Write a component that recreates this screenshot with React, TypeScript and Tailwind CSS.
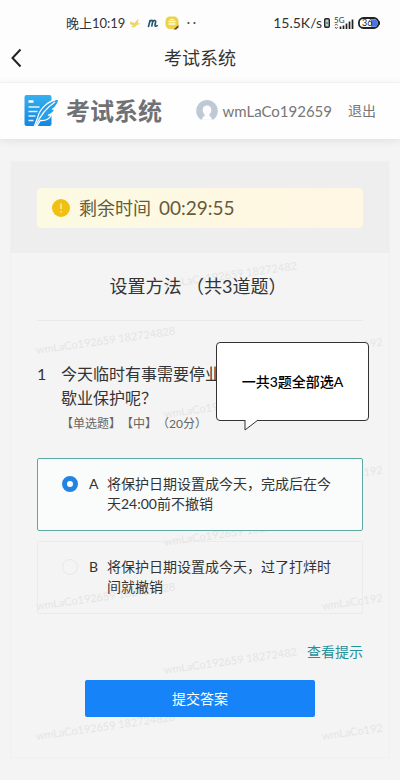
import { useState } from 'react';
import { clsx } from 'clsx';

interface Option {
  key: string;
  text: string;
}

const OPTIONS: Option[] = [
  { key: 'A', text: '将保护日期设置成今天，完成后在今天24:00前不撤销' },
  { key: 'B', text: '将保护日期设置成今天，过了打烊时间就撤销' },
];

function StatusBar() {
  return (
    <div className="flex h-[22px] items-center justify-between pl-[66px] pr-5 text-[#333]">
      <div className="flex items-center">
        <span className="text-[13px] leading-5">晚上10:19</span>
        <svg className="ml-1 h-3 w-3" viewBox="0 0 12 12" aria-hidden="true">
          <path d="M1 4.5 5.500 6 9.500 1.500 9 6l2.500 1-3 .8L5 10.500 2 10l2-1.500L1 7Z" fill="#ecd768" />
        </svg>
        <svg className="ml-[6px] h-3 w-3" viewBox="0 0 12 12" fill="none" aria-hidden="true">
          <path
            d="M1.5 9.5 3 3.5M2.7 5C4 2.6 6 3 5.6 5L4.8 9M5.6 5c1.2-2.2 3.4-2 3 0L8 8c-.2 1.4 1 1.6 2.2.6"
            stroke="#24566f"
            strokeWidth="1.6"
            strokeLinecap="round"
          />
        </svg>
        <svg className="ml-[6px] h-[14px] w-[14px]" viewBox="0 0 14 14" aria-hidden="true">
          <rect x="0.5" y="0.5" width="13" height="12.5" rx="4.5" fill="#ecd34c" />
          <path d="M3.5 5.5h7M3.5 8h7" stroke="#fffbe0" strokeWidth="1.4" />
          <path d="M5 3.5h4" stroke="#fffbe0" />
          <path d="m8.500 13.500 5-4.500v2.500l-2.500 2Z" fill="#6b3a22" />
        </svg>
        <svg className="ml-[6px] h-3 w-3" viewBox="0 0 12 12" fill="#444" aria-hidden="true">
          <circle cx="3.500" cy="6" r="1.1" />
          <circle cx="9.500" cy="6" r="1.1" />
        </svg>
      </div>
      <div className="flex items-center">
        <span className="text-sm leading-5">15.5K/s</span>
        <svg className="ml-[2px] h-[10px] w-[6px]" viewBox="0 0 6 10" aria-hidden="true">
          <rect x="0.7" y="0.7" width="4.6" height="8.6" rx="1.2" fill="#b9d6c8" stroke="#222" strokeWidth="1.4" />
          <path d="M2 5h2" stroke="#444" />
        </svg>
        <svg className="ml-1 h-[14px] w-5" viewBox="0 0 20 14" aria-hidden="true">
          <text x="0" y="6.500" fontSize="8" fill="#333">
            5G
          </text>
          <path d="m1 9.500 1.300-1.600L3.600 9.500M1 11l1.300 1.600L3.600 11" stroke="#555" fill="none" />
          <path d="M6.500 10.500V13M9.500 9.500V13M12.500 7.500V13M15.500 5.500V13M18.500 3.500V13" stroke="#222" strokeWidth="1.700" />
        </svg>
        <svg className="ml-1 h-3 w-[22px]" viewBox="0 0 22 12" aria-hidden="true">
          <rect x="0.900" y="1" width="19.500" height="10" rx="4.500" fill="#fff" stroke="#222" strokeWidth="1.800" />
          <path d="M13 2.200h3.600a2.600 2.600 0 0 1 2.600 2.600v2.400a2.600 2.600 0 0 1-2.600 2.600H13Z" fill="#4b74e0" />
          <path d="M21.400 4.300v3.400" stroke="#222" strokeWidth="1.200" />
          <text x="4" y="9" fontSize="9" fill="#222">
            36
          </text>
        </svg>
      </div>
    </div>
  );
}

function Logo() {
  return (
    <svg className="h-9 w-9" viewBox="0 0 36 36" aria-hidden="true">
      <defs>
        <linearGradient id="paper" x1="0" y1="0" x2="0" y2="1">
          <stop offset="0" stopColor="#35b0f0" />
          <stop offset="1" stopColor="#1587e0" />
        </linearGradient>
      </defs>
      <rect x="0.5" y="2" width="27" height="31" rx="2" fill="url(#paper)" />
      <path d="M4.500 8.500h5" stroke="#fff" strokeWidth="2.500" />
      <path d="M4.500 14h11M4.500 18.500h9M4.500 23h7M4.500 27.500h5" stroke="#e4f4ff" strokeWidth="1.300" />
      <path
        d="M35 5.500C24 8 15.500 15.500 13.500 25L10.500 33h2.500l3.300-5.500c5.200.5 9-1.500 11.200-5.500l-3 .2c3.500-1.200 5.500-3.400 6.500-6.200l-2.500.2c3.500-2.400 6-6.200 6.500-10.700Z"
        fill="#2a9fe9"
        stroke="#fff"
        strokeWidth="1.300"
        strokeLinejoin="round"
      />
      <path d="M12 32.500C16 23 22 15 31 9" stroke="#fff" strokeWidth="1.300" fill="none" />
    </svg>
  );
}

function Avatar() {
  return (
    <svg className="h-[22px] w-[22px]" viewBox="0 0 22 22" aria-hidden="true">
      <path d="M4.500 19.500a10.800 10.800 0 1 1 13 0Z" fill="#bfc9d6" />
      <path
        d="M11 5.500c2.800 0 4.300 2 4.300 4.500 0 2-1 3.600-1.800 4.300v1.700c1.500.7 2.300 1.900 2.500 3.700H6c.2-1.800 1-3 2.500-3.700v-1.700c-.8-.7-1.800-2.300-1.800-4.300 0-2.500 1.500-4.500 4.300-4.500Z"
        fill="#fdfdfd"
      />
    </svg>
  );
}

function Watermark({ text, className }: { text: string; className: string }) {
  return (
    <span
      className={clsx(
        'absolute origin-bottom-left -rotate-8 whitespace-nowrap text-[11px] leading-4 text-[#e5e5e5]',
        className
      )}
    >
      {text}
    </span>
  );
}

function Watermarks() {
  return (
    <div className="pointer-events-none absolute inset-0 select-none" aria-hidden="true">
      <Watermark text="wmLaCo192659 182724828" className="left-[26px] top-[180px]" />
      <Watermark text="wmLaCo192659 182724828" className="left-[26px] top-[436px]" />
      <Watermark text="wmLaCo192659 182724828" className="left-[26px] top-[566px]" />
      <Watermark text="wmLaCo192659 18272482" className="left-[154px] top-[114px]" />
      <Watermark text="wmLaCo192659" className="left-[154px] top-[244px]" />
      <Watermark text="wmLaCo192659 18272482" className="left-[154px] top-[372px]" />
      <Watermark text="wmLaCo192659 18272482" className="left-[154px] top-[500px]" />
      <Watermark text="wmLaCo192" className="left-[312px] top-[180px]" />
      <Watermark text="wmLaCo192" className="left-[312px] top-[308px]" />
      <Watermark text="wmLaCo192" className="left-[312px] top-[436px]" />
      <Watermark text="wmLaCo192" className="left-[312px] top-[566px]" />
    </div>
  );
}

function Callout() {
  return (
    <div className="absolute left-[179px] -top-5 w-[153px]">
      <div className="flex h-[79px] items-center justify-center rounded border border-[#333] bg-white text-sm font-medium text-black">
        一共3题全部选A
      </div>
      <svg className="absolute left-7 top-[77px] h-3 w-4" viewBox="0 0 16 12" aria-hidden="true">
        <path d="M1 0V11L14 1V0Z" fill="#fff" />
        <path d="M1 1V11L14 1" fill="none" stroke="#333" />
      </svg>
    </div>
  );
}

export default function App() {
  const [selected, setSelected] = useState('A');

  return (
    <div className="min-h-screen bg-[#f4f4f4] font-[Lato,'Noto_Sans_CJK_SC',sans-serif] text-[#333]">
      <div className="bg-[#fdfdfd] pt-3">
        <StatusBar />
        <div className="relative flex h-12 items-center justify-center">
          <button type="button" aria-label="返回" className="absolute left-[9px] p-px">
            <svg className="h-5 w-3" viewBox="0 0 12 20" fill="none" aria-hidden="true">
              <path d="M10.500 1.500 2.500 10l8 8.500" stroke="#222" strokeWidth="2" />
            </svg>
          </button>
          <h1 className="text-lg">考试系统</h1>
        </div>
      </div>

      <header className="relative flex h-[57px] items-center justify-between border-t border-[#f0f0f0] bg-[#fefefe] px-6 shadow-[0_2px_8px_rgba(0,0,0,0.08)]">
        <div className="flex items-center gap-[6px]">
          <Logo />
          <span className="text-2xl font-bold text-[#707174]">考试系统</span>
        </div>
        <div className="flex items-center text-[#777]">
          <Avatar />
          <span className="ml-1 text-[15px]">wmLaCo192659</span>
          <a href="#logout" className="ml-4 text-sm">
            退出
          </a>
        </div>
      </header>

      <main className="px-[10px] pb-[22px] pt-[22px]">
        <div className="relative border border-[#f0f0f0]">
          <Watermarks />
          <div className="relative bg-[#eee] px-[26px] pb-[25px] pt-[26px]">
            <div className="flex h-10 items-center rounded bg-linear-to-r from-[#fcfae2] to-[#fff6e3] pl-[15px] text-[#665a3c]">
              <svg className="h-[18px] w-[18px]" viewBox="0 0 18 18" aria-hidden="true">
                <circle cx="9" cy="9" r="9" fill="#f2c011" />
                <path d="M9 4.500v5.500" stroke="#fff0b0" strokeWidth="1.500" />
                <circle cx="9" cy="12.800" r="0.900" fill="#fff0b0" />
              </svg>
              <span className="ml-[9px] text-lg">剩余时间</span>
              <span className="ml-2 text-[19px]">00:29:55</span>
            </div>
          </div>

          <div className="relative px-[26px] pb-10">
            <h2 className="flex h-[68px] items-center justify-center border-b border-[#e9e9e9] pb-[2px] pr-1 text-lg">
              设置方法 （共3道题）
            </h2>

            <section className="relative mt-[41px] flex">
              <span className="w-6 text-base leading-6">1</span>
              <div>
                <p className="text-base leading-6">
                  今天临时有事需要停业
                  <br />
                  歇业保护呢？
                </p>
                <p className="mt-1 text-xs leading-5 text-[#666] [text-spacing-trim:space-all]">
                  【单选题】【中】（20分）
                </p>
              </div>
              <Callout />
            </section>

            <div role="radiogroup" aria-label="选项" className="mt-6 flex flex-col gap-[10px]">
              {OPTIONS.map((option) => {
                const checked = option.key === selected;
                return (
                  <label
                    key={option.key}
                    className={clsx(
                      'flex cursor-pointer rounded-xs border pb-4 pl-6 pr-6 pt-[15px] text-sm leading-5',
                      checked ? 'border-[#5fa9a4] bg-[#fafbfb]' : 'border-[#ebebeb]'
                    )}
                  >
                    <input
                      type="radio"
                      name="answer"
                      value={option.key}
                      checked={checked}
                      onChange={() => setSelected(option.key)}
                      className="mt-[2px] size-4 shrink-0 appearance-none rounded-full border border-[#e8e8e8] checked:border-[5px] checked:border-[#2385e2] checked:bg-white"
                    />
                    <span className="ml-[11px] w-[18px] shrink-0">{option.key}</span>
                    <span>{option.text}</span>
                  </label>
                );
              })}
            </div>

            <div className="mt-7 flex justify-end">
              <a href="#hint" className="text-sm leading-5 text-[#23909a]">
                查看提示
              </a>
            </div>

            <div className="mt-[18px] px-12">
              <button type="button" className="h-[37px] w-full rounded-xs bg-[#1684f8] text-sm text-white">
                提交答案
              </button>
            </div>
          </div>
        </div>
      </main>
    </div>
  );
}
